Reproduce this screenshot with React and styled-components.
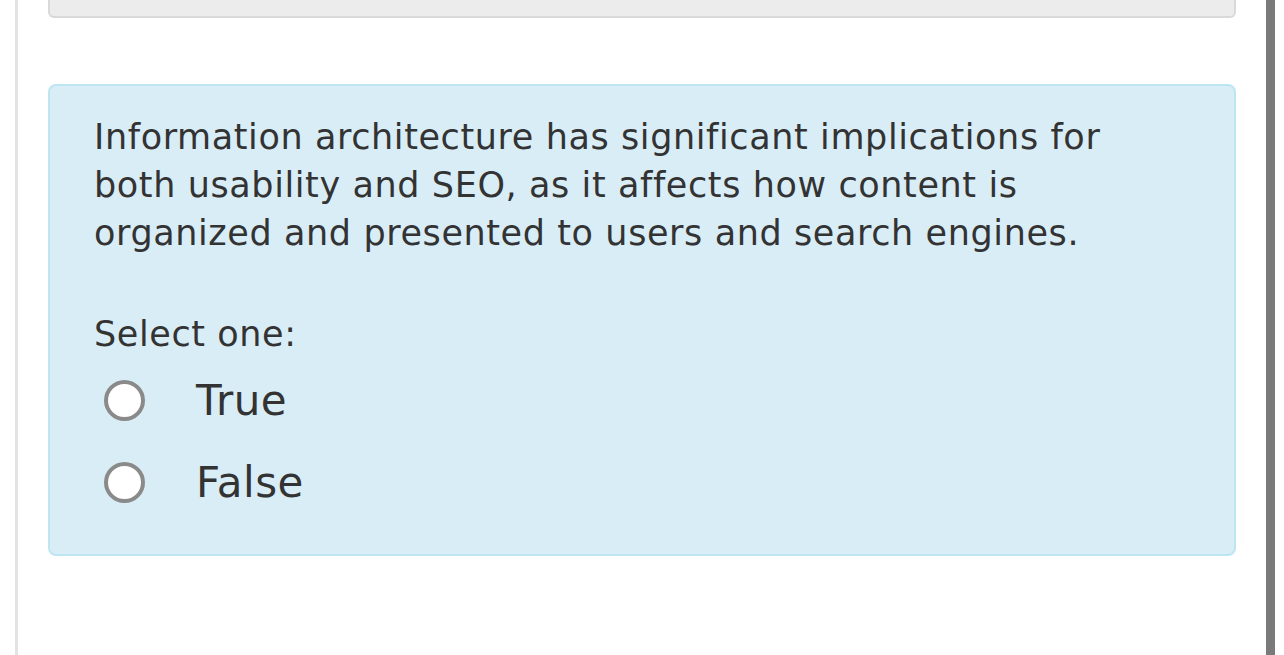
import React from "react";
import styled, { createGlobalStyle } from "styled-components";

const Global = createGlobalStyle`
  html, body { margin: 0; padding: 0; background: #fff; }
  body { font-family: "DejaVu Sans", Verdana, sans-serif; color: #333; overflow: hidden; }
`;

const Page = styled.div`
  display: flex;
  height: 655px;
  padding-left: 15px;
`;

const Main = styled.div`
  flex: 0 0 1251px;
  border-left: 3px solid #e3e3e3;
  box-sizing: border-box;
  padding: 0 30px 0 30px;
`;

const ScrollBar = styled.div`
  flex: 0 0 9px;
  background: #7a7a7a;
`;

const PrevBox = styled.div`
  height: 18px;
  box-sizing: border-box;
  background: #ececec;
  border: 2px solid #d9d9d9;
  border-top: none;
  border-radius: 0 0 6px 6px;
`;

const QuestionBox = styled.div`
  margin-top: 66px;
  height: 472px;
  box-sizing: border-box;
  background: #d9edf7;
  border: 2px solid #bde6f1;
  border-radius: 8px;
  padding: 27px 44px;
`;

const QText = styled.p`
  margin: 0;
  font-size: 35px;
  letter-spacing: 0.6px;
  line-height: 48px;
  max-width: 1040px;
`;

const Prompt = styled.div`
  margin-top: 53px;
  font-size: 35px;
  letter-spacing: 0.6px;
  line-height: 48px;
`;

const Options = styled.div`
  display: flex;
  flex-direction: column;
  gap: 34px;
  margin-top: 18px;
`;

const Option = styled.label`
  display: flex;
  align-items: center;
  height: 48px;
  font-size: 42px;
  letter-spacing: 0.5px;
`;

const Radio = styled.span`
  width: 41px;
  height: 41px;
  box-sizing: border-box;
  border-radius: 50%;
  border: 4px solid #8a8a8a;
  background: #fff;
  margin-left: 10px;
  margin-right: 51px;
  flex: none;
`;

export default function App() {
  return (
    <>
      <Global />
      <Page>
        <Main>
          <PrevBox />
          <QuestionBox>
            <QText>
              Information architecture has significant implications for both
              usability and SEO, as it affects how content is organized and
              presented to users and search engines.
            </QText>
            <Prompt>Select one:</Prompt>
            <Options>
              <Option>
                <Radio />
                True
              </Option>
              <Option>
                <Radio />
                False
              </Option>
            </Options>
          </QuestionBox>
        </Main>
        <ScrollBar />
      </Page>
    </>
  );
}
